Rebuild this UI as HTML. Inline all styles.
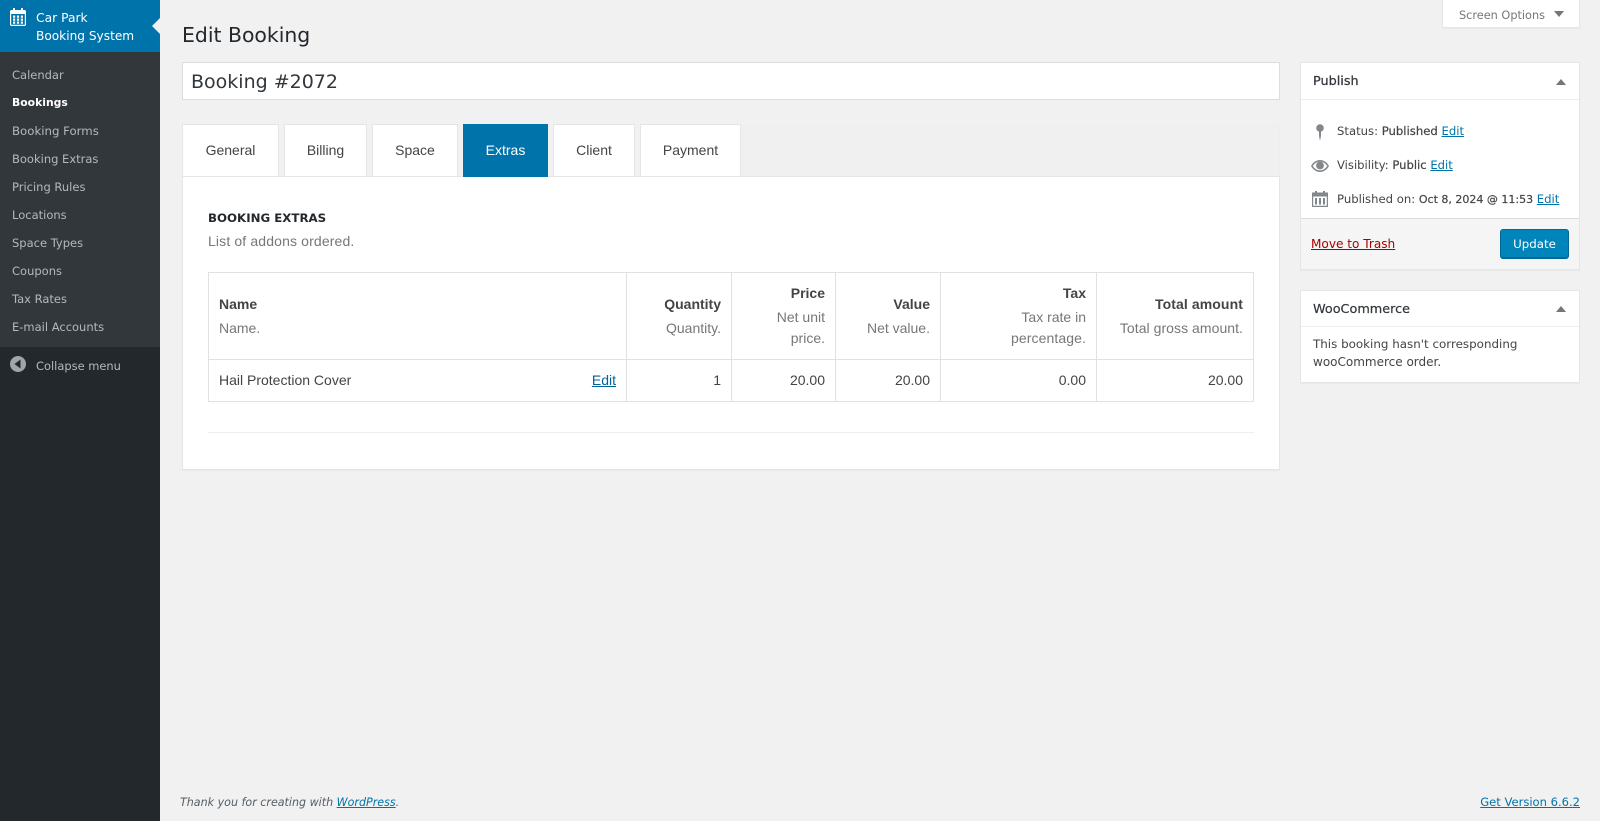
<!DOCTYPE html>
<html lang="en"><head><meta charset="utf-8"><title>Edit Booking</title>
<style>
html,body{margin:0;padding:0;width:1600px;height:821px;overflow:hidden;background:#f1f1f1;font-family:"DejaVu Sans","Liberation Sans",sans-serif;font-size:12px;color:#444}
.a{position:absolute}
.t{position:absolute;height:20px;line-height:20px;white-space:nowrap}
.r{text-align:right}
.ar{font-family:"Liberation Sans",Arial,sans-serif;font-size:14px}
.box{position:absolute;background:#fff;border:1px solid #e5e5e5;box-sizing:border-box;box-shadow:0 1px 1px rgba(0,0,0,.04)}
.tab{position:absolute;top:124px;height:52px;box-sizing:border-box;background:#fff;border:1px solid #e5e5e5;border-bottom:0;text-align:center;line-height:50px;font-family:"Liberation Sans",sans-serif;font-size:14px;color:#444}
.m{left:12px;color:#b4b9be;font-size:11.500px}
a{color:#0073aa;text-decoration:underline}
.line{position:absolute;background:#e1e1e1}
.b{font-weight:bold;color:#444}
.g{color:#777}
</style></head><body>

<div class="a" style="left:0;top:0;width:160px;height:821px;background:#23282d"></div>
<div class="a" style="left:0;top:52px;width:160px;height:295px;background:#32373c"></div>
<div class="a" style="left:0;top:0;width:160px;height:52px;background:#0073aa"></div>
<div class="a" style="left:152px;top:18px;width:0;height:0;border-top:8px solid transparent;border-bottom:8px solid transparent;border-right:8px solid #f1f1f1"></div>
<svg class="a" style="left:10px;top:8px" width="16" height="18" viewBox="0 0 16 18"><path fill="#fff" d="M3 0h2v2h6V0h2v2h1.500C15.300 2 16 2.700 16 3.500V16.500c0 .8-.7 1.500-1.500 1.500h-13C.7 18 0 17.300 0 16.500V3.500C0 2.700.7 2 1.500 2H3zM1.200 6v10.800h13.600V6z"/><path fill="#fff" d="M3 7.500h2.200v2.200H3zM6.900 7.500h2.200v2.200H6.900zM10.800 7.500H13v2.200h-2.200zM3 10.500h2.200v2.200H3zM6.900 10.500h2.200v2.200H6.900zM10.800 10.500H13v2.200h-2.200zM3 13.500h2.200v2.200H3zM6.900 13.500h2.200v2.200H6.900zM10.800 13.500H13v2.200h-2.200z"/></svg>
<div class="t" style="left:36px;top:8px;color:#fff;font-size:12.300px">Car Park</div>
<div class="t" style="left:36px;top:26px;color:#fff;font-size:12.150px">Booking System</div>

<div class="t m" style="top:65px">Calendar</div>
<div class="t m" style="top:93px;color:#fff;font-weight:bold;font-size:10.800px">Bookings</div>
<div class="t m" style="top:121px;font-size:11.750px">Booking Forms</div>
<div class="t m" style="top:149px">Booking Extras</div>
<div class="t m" style="top:177px">Pricing Rules</div>
<div class="t m" style="top:205px">Locations</div>
<div class="t m" style="top:233px">Space Types</div>
<div class="t m" style="top:261px">Coupons</div>
<div class="t m" style="top:289px">Tax Rates</div>
<div class="t m" style="top:317px">E-mail Accounts</div>
<svg class="a" style="left:10px;top:356px" width="16" height="16" viewBox="0 0 16 16"><circle cx="8" cy="8" r="8" fill="#a0a5aa"/><path d="M10.500 3.500v9L4.500 8z" fill="#23282d"/></svg>
<div class="t m" style="left:36px;top:356px;font-size:11.450px">Collapse menu</div>

<div class="t" style="left:182px;top:25px;color:#23282d;font-size:20.400px">Edit Booking</div>
<div class="a" style="left:182px;top:62px;width:1098px;height:38px;box-sizing:border-box;background:#fff;border:1px solid #ddd"></div>
<div class="t" style="left:191px;top:72px;font-size:19px;color:#32373c">Booking #2072</div>

<div class="a" style="left:741px;top:124px;width:539px;height:52px;background:#f0f0f0;border-right:1px solid #eee;box-sizing:border-box"></div>
<div class="box" style="left:182px;top:176px;width:1098px;height:294px"></div>
<div class="tab" style="left:182px;width:97px">General</div>
<div class="tab" style="left:284px;width:83px">Billing</div>
<div class="tab" style="left:372px;width:86px">Space</div>
<div class="tab" style="left:463px;width:85px;height:53px;background:#0073aa;border-color:#0073aa;color:#fff">Extras</div>
<div class="tab" style="left:553px;width:82px">Client</div>
<div class="tab" style="left:640px;width:101px">Payment</div>

<div class="t" style="left:208px;top:208px;font-weight:bold;font-size:11.800px;color:#23282d">BOOKING EXTRAS</div>
<div class="t ar g" style="left:208px;top:231px;letter-spacing:.14px">List of addons ordered.</div>

<div class="a" style="left:208px;top:272px;width:1046px;height:130px;box-sizing:border-box;background:#fff;border:1px solid #e1e1e1"></div>
<div class="line" style="left:209px;top:359px;width:1044px;height:1px"></div>
<div class="line" style="left:626px;top:273px;width:1px;height:128px"></div>
<div class="line" style="left:731px;top:273px;width:1px;height:128px"></div>
<div class="line" style="left:835px;top:273px;width:1px;height:128px"></div>
<div class="line" style="left:940px;top:273px;width:1px;height:128px"></div>
<div class="line" style="left:1096px;top:273px;width:1px;height:128px"></div>

<div class="t ar b" style="left:219px;top:294px">Name</div>
<div class="t ar g" style="left:219px;top:318px">Name.</div>
<div class="t ar b r" style="left:627px;width:94px;top:294px">Quantity</div>
<div class="t ar g r" style="left:627px;width:94px;top:318px">Quantity.</div>
<div class="t ar b r" style="left:732px;width:93px;top:283px">Price</div>
<div class="t ar g r" style="left:732px;width:93px;top:307px">Net unit</div>
<div class="t ar g r" style="left:732px;width:93px;top:328px">price.</div>
<div class="t ar b r" style="left:836px;width:94px;top:294px">Value</div>
<div class="t ar g r" style="left:836px;width:94px;top:318px">Net value.</div>
<div class="t ar b r" style="left:941px;width:145px;top:283px">Tax</div>
<div class="t ar g r" style="left:941px;width:145px;top:307px">Tax rate in</div>
<div class="t ar g r" style="left:941px;width:145px;top:328px;letter-spacing:.1px">percentage.</div>
<div class="t ar b r" style="left:1097px;width:146px;top:294px;letter-spacing:.1px">Total amount</div>
<div class="t ar g r" style="left:1097px;width:146px;top:318px;letter-spacing:.05px">Total gross amount.</div>

<div class="t ar" style="left:219px;top:370px">Hail Protection Cover</div>
<div class="t ar r" style="left:560px;width:56px;top:370px"><a href="#" style="color:#00649a">Edit</a></div>
<div class="t ar r" style="left:627px;width:94px;top:370px">1</div>
<div class="t ar r" style="left:732px;width:93px;top:370px">20.00</div>
<div class="t ar r" style="left:836px;width:94px;top:370px">20.00</div>
<div class="t ar r" style="left:941px;width:145px;top:370px">0.00</div>
<div class="t ar r" style="left:1097px;width:146px;top:370px">20.00</div>
<div class="a" style="left:208px;top:432px;width:1046px;height:1px;background:#eee"></div>

<div class="box" style="left:1442px;top:-1px;width:138px;height:29px"></div>
<div class="t" style="left:1459px;top:6px;font-size:11.300px;color:#72777c">Screen Options</div>
<div class="a" style="left:1554px;top:11px;width:0;height:0;border-left:5px solid transparent;border-right:5px solid transparent;border-top:6px solid #72777c"></div>

<div class="box" style="left:1300px;top:62px;width:280px;height:208px"></div>
<div class="a" style="left:1301px;top:99px;width:278px;height:1px;background:#eee"></div>
<div class="a" style="left:1301px;top:218px;width:278px;height:51px;background:#f5f5f5;border-top:1px solid #ddd;box-sizing:border-box"></div>
<div class="t" style="left:1313px;top:72px;font-size:12.800px;color:#32373c;-webkit-text-stroke:.25px #32373c">Publish</div>
<div class="a" style="left:1556px;top:79px;width:0;height:0;border-left:5px solid transparent;border-right:5px solid transparent;border-bottom:6px solid #72777c"></div>

<svg class="a" style="left:1314px;top:124px" width="12" height="16" viewBox="0 0 12 16"><circle cx="6" cy="4" r="3.800" fill="#82878c"/><path d="M5 6h2v6l-.8 4h-.4L5 12z" fill="#82878c"/></svg>
<div class="t" style="left:1337px;top:121px;font-size:11.650px">Status: <span style="-webkit-text-stroke:.2px #444">Published</span> <a href="#">Edit</a></div>
<svg class="a" style="left:1311px;top:159px" width="18" height="14" viewBox="0 0 18 14"><path fill="#82878c" fill-rule="evenodd" d="M9 1C4.800 1 1.700 4 0 7c1.700 3 4.800 6 9 6s7.300-3 9-6c-1.700-3-4.800-6-9-6zm0 1.600c3.200 0 5.700 2.100 7.200 4.400C14.700 9.300 12.200 11.400 9 11.400S3.300 9.300 1.800 7C3.300 4.700 5.800 2.600 9 2.600z"/><circle cx="9" cy="6.500" r="3.900" fill="#82878c"/></svg>
<div class="t" style="left:1337px;top:155px;font-size:11.600px">Visibility: <span style="-webkit-text-stroke:.2px #444">Public</span> <a href="#">Edit</a></div>
<svg class="a" style="left:1312px;top:191px" width="16" height="16" viewBox="0 0 16 16"><path fill="#82878c" fill-rule="evenodd" d="M3 0h2v1.500h6V0h2v1.500h3V16H0V1.500h3zM1.200 5.500v9.300h13.600V5.500z"/><path fill="#82878c" d="M3 7h2v6.500H3zM7 7h2v6.500H7zM11 7h2v6.500h-2z"/></svg>
<div class="t" style="left:1337px;top:189px;font-size:11.650px">Published on: <span style="-webkit-text-stroke:.2px #444;font-size:11px">Oct 8, 2024 @ 11:53</span> <a href="#">Edit</a></div>
<div class="t" style="left:1311px;top:234px;font-size:12.100px"><a href="#" style="color:#a00">Move to Trash</a></div>
<div class="a" style="left:1500px;top:229px;width:69px;height:30px;box-sizing:border-box;background:#0085ba;border:1px solid #006799;border-bottom-width:2px;border-radius:3px;color:#fff;text-align:center;line-height:29px;font-size:11.800px">Update</div>

<div class="box" style="left:1300px;top:290px;width:280px;height:93px"></div>
<div class="a" style="left:1301px;top:326px;width:278px;height:1px;background:#eee"></div>
<div class="t" style="left:1313px;top:300px;font-size:12.800px;color:#32373c;-webkit-text-stroke:.2px #32373c">WooCommerce</div>
<div class="a" style="left:1556px;top:306px;width:0;height:0;border-left:5px solid transparent;border-right:5px solid transparent;border-bottom:6px solid #72777c"></div>
<div class="t" style="left:1313px;top:334px;font-size:11.900px">This booking hasn't corresponding</div>
<div class="t" style="left:1313px;top:352px;font-size:12px">wooCommerce order.</div>

<div class="t" style="left:180px;top:793px;font-size:11.100px;font-style:italic;color:#555d66">Thank you for creating with <a href="#">WordPress</a>.</div>
<div class="t r" style="left:1400px;width:180px;top:792px;font-size:11.550px"><a href="#">Get Version 6.6.2</a></div>
</body></html>
